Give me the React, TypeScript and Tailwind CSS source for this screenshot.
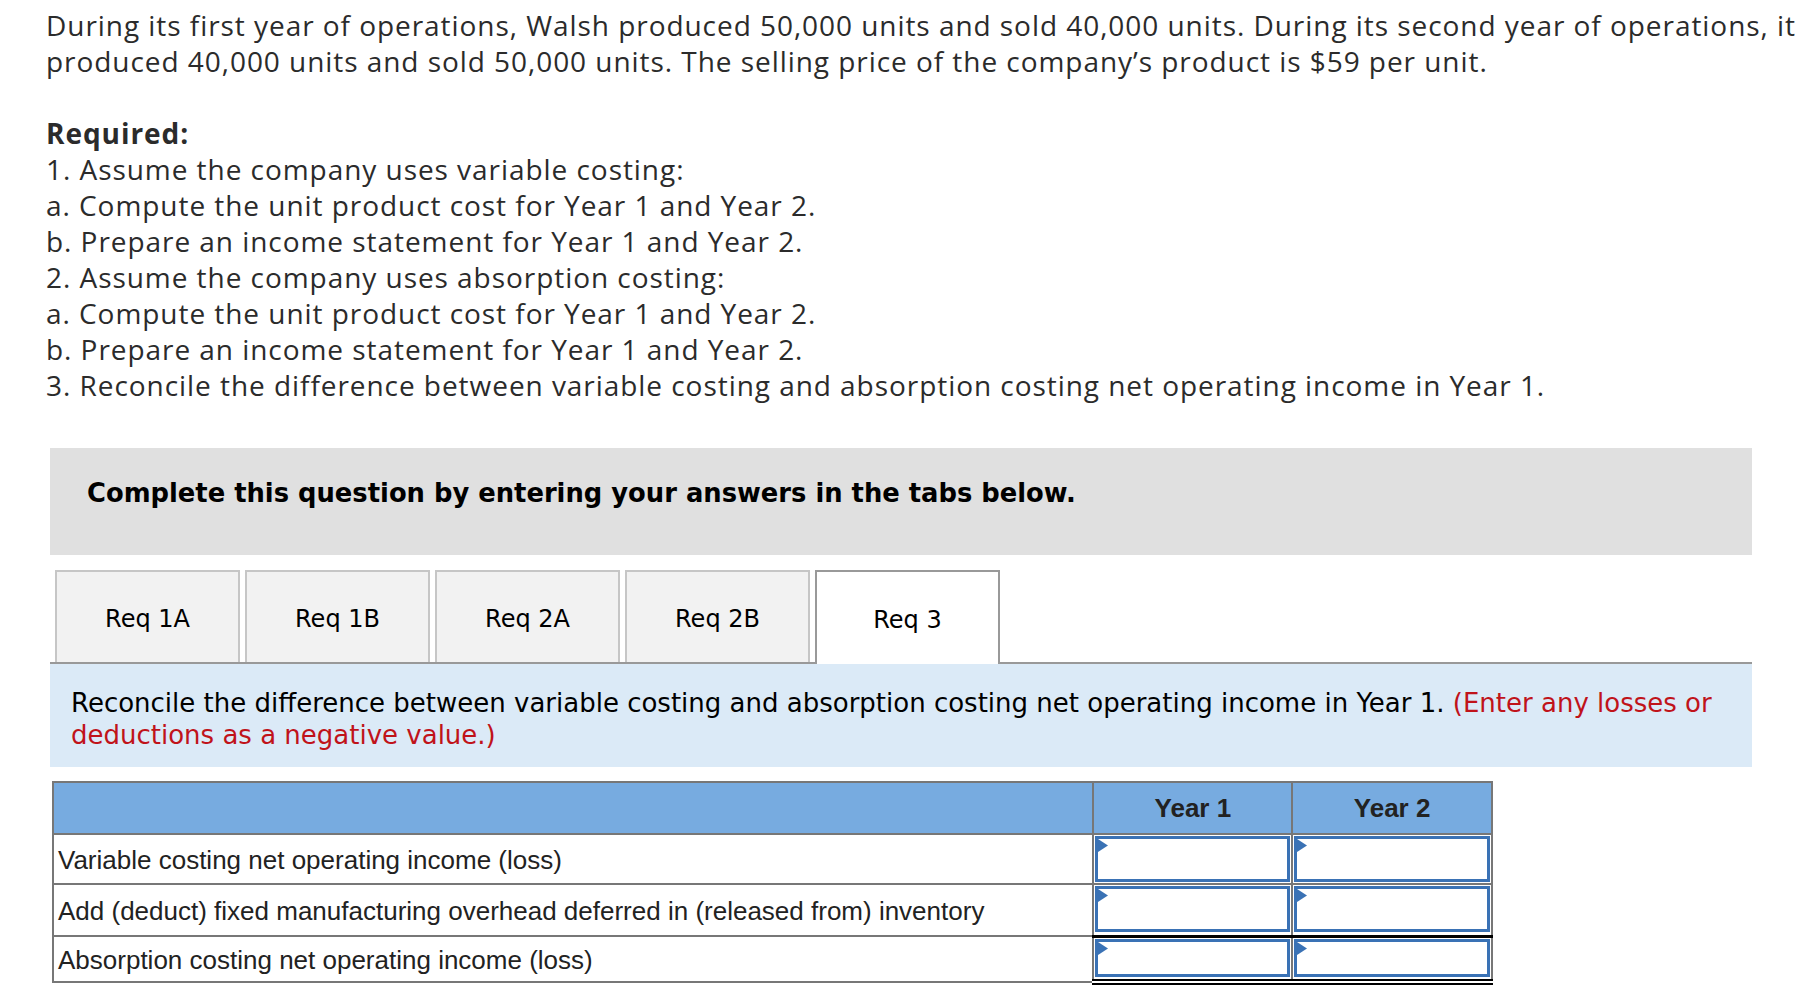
import React from 'react';

const intro = [
  'During its first year of operations, Walsh produced 50,000 units and sold 40,000 units. During its second year of operations, it',
  'produced 40,000 units and sold 50,000 units. The selling price of the company\u2019s product is $59 per unit.',
];

const required = [
  '1. Assume the company uses variable costing:',
  'a. Compute the unit product cost for Year 1 and Year 2.',
  'b. Prepare an income statement for Year 1 and Year 2.',
  '2. Assume the company uses absorption costing:',
  'a. Compute the unit product cost for Year 1 and Year 2.',
  'b. Prepare an income statement for Year 1 and Year 2.',
  '3. Reconcile the difference between variable costing and absorption costing net operating income in Year 1.',
];

const tabs = ['Req 1A', 'Req 1B', 'Req 2A', 'Req 2B', 'Req 3'];

const InputBox = ({ h }: { h: string }) => (
  <div className={`relative border-[3px] border-[#3a72b5] bg-white ${h}`}>
    <svg className="absolute left-0 top-0 z-10" width="10" height="13" viewBox="0 0 10 13">
      <path d="M0 0 L10 6.5 L0 13 Z" fill="#3a72b5" />
    </svg>
  </div>
);

export default function App() {
  return (
    <div className="h-[995px] w-[1798px] overflow-hidden bg-white">
      <div className="pl-[46px] pt-[7px] font-['Open_Sans',sans-serif] text-[28px] leading-[36px] tracking-[0.95px] text-[#2b2b2b]">
        {intro.map((l) => (
          <div key={l} className="whitespace-nowrap">{l}</div>
        ))}
        <div className="mt-[36px] font-bold">Required:</div>
        {required.map((l, i) => (
          <div key={i} className="whitespace-nowrap">{l}</div>
        ))}
      </div>

      <div className="ml-[50px] mt-[45px] w-[1702px]">
        <div className="h-[107px] bg-[#e0e0e0] pl-[37px] pt-[26px] font-['DejaVu_Sans',Verdana,sans-serif] text-[25.8px] font-bold text-black">
          Complete this question by entering your answers in the tabs below.
        </div>

        <div className="mt-[15px] flex h-[94px] gap-[5px] border-b-2 border-[#999] pl-[5px] font-['DejaVu_Sans',Verdana,sans-serif] text-[24px] text-black">
          {tabs.map((t) => {
            const active = t === 'Req 3';
            return (
              <div
                key={t}
                className={
                  active
                    ? '-mb-[2px] flex w-[185px] items-center justify-center border-2 border-b-0 border-[#999] bg-white pt-[4px]'
                    : 'flex w-[185px] items-center justify-center border-2 border-b-0 border-[#c6c6c6] bg-[#f2f2f2] pt-[4px]'
                }
              >
                {t}
              </div>
            );
          })}
        </div>

        <div className="h-[103px] bg-[#dbeaf7] pl-[21px] pr-[20px] pt-[23px] font-['DejaVu_Sans',Verdana,sans-serif] text-[26px] leading-[32px] text-black">
          Reconcile the difference between variable costing and absorption costing net operating income in Year 1.{' '}
          <span className="text-[#c0131a]">(Enter any losses or deductions as a negative value.)</span>
        </div>
      </div>

      <table className="ml-[52px] mt-[14px] w-[1441px] border-collapse font-['Liberation_Sans',Arial,sans-serif] text-[26px] text-[#222]">
        <thead>
          <tr className="h-[52px] bg-[#77abe0]">
            <th className="w-[1042px] border-2 border-[#777]" />
            <th className="w-[199px] border-2 border-[#777] text-center font-bold">Year 1</th>
            <th className="w-[200px] border-2 border-[#777] text-center font-bold">Year 2</th>
          </tr>
        </thead>
        <tbody>
          <tr className="h-[50px]">
            <td className="border-2 border-[#777] pl-[4px] pt-[2px] text-left">Variable costing net operating income (loss)</td>
            <td className="border-2 border-[#777] p-[1px] align-top"><InputBox h="h-[46px]" /></td>
            <td className="border-2 border-[#777] p-[1px] align-top"><InputBox h="h-[46px]" /></td>
          </tr>
          <tr className="h-[52px]">
            <td className="border-2 border-[#777] pl-[4px] pt-[2px] text-left">Add (deduct) fixed manufacturing overhead deferred in (released from) inventory</td>
            <td className="border-2 border-[#777] border-b-[3px] border-b-black p-[1px] align-top"><InputBox h="h-[46px]" /></td>
            <td className="border-2 border-[#777] border-b-[3px] border-b-black p-[1px] align-top"><InputBox h="h-[46px]" /></td>
          </tr>
          <tr className="h-[46px]">
            <td className="border-2 border-[#777] pl-[4px] pt-[2px] text-left">Absorption costing net operating income (loss)</td>
            <td className="border-2 border-[#777] border-b-[6px] border-double border-b-black p-[1px] align-top"><InputBox h="h-[38px]" /></td>
            <td className="border-2 border-[#777] border-b-[6px] border-double border-b-black p-[1px] align-top"><InputBox h="h-[38px]" /></td>
          </tr>
        </tbody>
      </table>
    </div>
  );
}
